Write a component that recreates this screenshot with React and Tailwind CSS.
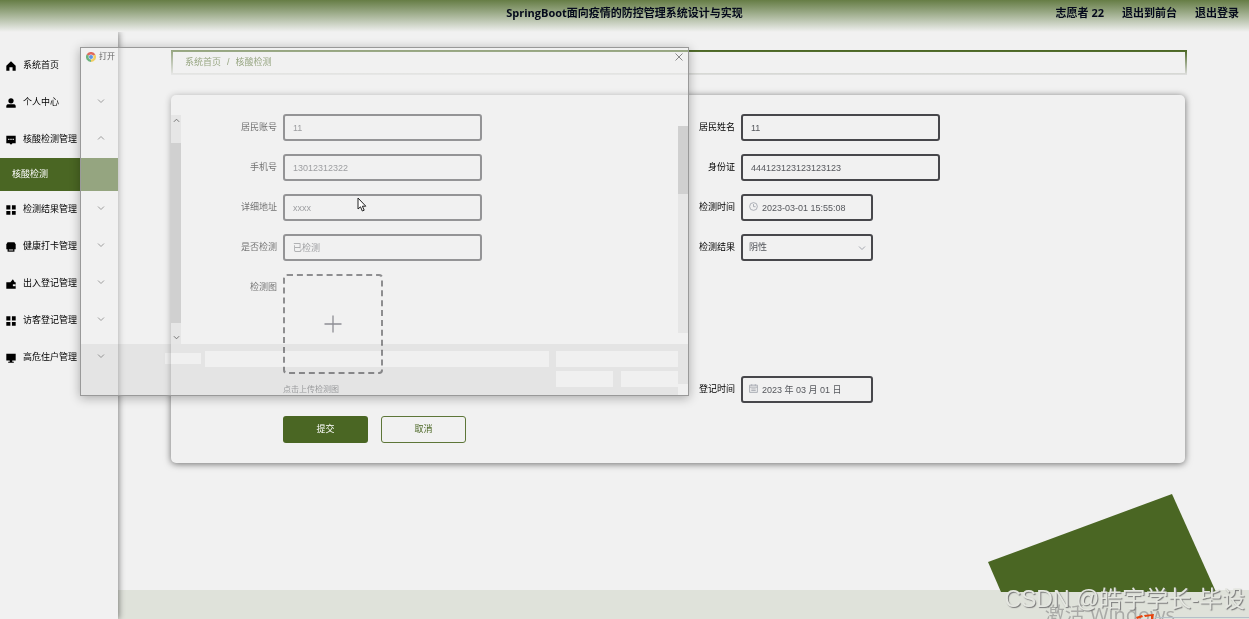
import React from 'react';

const ICONS = {
  home: <path d="M8 0.5 0.5 7.5V15.5H5.5V10H10.5V15.5H15.5V7.5Z" />,
  user: (
    <>
      <circle cx="8" cy="4.5" r="4.2" />
      <path d="M0.5 15.5V13C0.5 11 2 10 4 10H12C14 10 15.5 11 15.5 13V15.5Z" />
    </>
  ),
  chat: (
    <>
      <path d="M0.5 1H15.5V13H10.5L8 15.5 5.5 13H0.5Z" />
      <path d="M3.5 6H5.5V8H3.5ZM7 6H9V8H7ZM10.5 6H12.5V8H10.5Z" fill="#f1f1f1" />
    </>
  ),
  grid: <path d="M0.5 0.5H7V7H0.5ZM9.5 0.5H15.5V7H9.5ZM0.5 9.5H7V15.5H0.5ZM9.5 9.5H15.5V15.5H9.5Z" />,
  printer: (
    <>
      <path d="M2.5 0.5H13.5L15.5 4V11.5H0.5V4Z" />
      <path d="M2.5 10.5H13.5V15.5H2.5Z" />
      <path d="M4.5 12H11.5V13.5H4.5Z" fill="#f1f1f1" />
    </>
  ),
  wallet: (
    <>
      <path d="M0.5 5H7L11 0.5 14 5H15.5V15.5H0.5Z" />
      <path d="M11 8.5H15.5V11.5H11Z" fill="#f1f1f1" />
    </>
  ),
  monitor: <path d="M0.5 1H15.5V12H10V14H12.5V15.5H3.5V14H6V12H0.5Z" />,
};

const MENU = [
  { name: '系统首页', icon: 'home' },
  { name: '个人中心', icon: 'user', arrow: 'down' },
  { name: '核酸检测管理', icon: 'chat', arrow: 'up', child: '核酸检测' },
  { name: '检测结果管理', icon: 'grid', arrow: 'down' },
  { name: '健康打卡管理', icon: 'printer', arrow: 'down' },
  { name: '出入登记管理', icon: 'wallet', arrow: 'down' },
  { name: '访客登记管理', icon: 'grid', arrow: 'down' },
  { name: '高危住户管理', icon: 'monitor', arrow: 'down' },
];

const Chevron = ({ up, className }) => (
  <svg viewBox="0 0 8 8" className={className} fill="none" stroke="currentColor" strokeWidth="1">
    <path d={up ? 'M1 5.5 4 2.5 7 5.5' : 'M1 2.5 4 5.5 7 2.5'} />
  </svg>
);

const Header = () => (
  <header className="grid h-8 grid-cols-[1fr_auto_1fr] items-start bg-linear-to-b from-[#667d45] to-[#f1f1f1] pt-[5px] font-['Open_Sans','Noto_Sans_CJK_SC',sans-serif] text-[11px] leading-4 font-bold text-[#050a1c]">
    <span />
    <h1>SpringBoot面向疫情的防控管理系统设计与实现</h1>
    <nav className="flex justify-end gap-[18px] pr-[10px]">
      <span>志愿者 22</span>
      <a href="#front">退出到前台</a>
      <a href="#logout">退出登录</a>
    </nav>
  </header>
);

const Sidebar = () => (
  <aside className="relative w-[118px] shrink-0 bg-[#f1f1f1] pt-[15px] shadow-[1px_0_6px_rgba(0,0,0,0.45)] [clip-path:inset(0_-12px_0_0)]">
    <ul>
      {MENU.map((item) => (
        <li key={item.name}>
          <a href="#menu" className="flex h-[37px] items-center pl-[6px] pr-[13px] text-[9px] text-black">
            <svg viewBox="0 0 16 16" className="mr-[7px] size-[10px] shrink-0">
              {ICONS[item.icon]}
            </svg>
            <span className="flex-1 whitespace-nowrap">{item.name}</span>
            {item.arrow && <Chevron up={item.arrow === 'up'} className="mb-[3px] size-2 text-[#555]" />}
          </a>
          {item.child && (
            <a href="#child" className="flex h-[33px] items-center bg-[#4a6623] pl-3 text-[9px] text-white">
              {item.child}
            </a>
          )}
        </li>
      ))}
    </ul>
  </aside>
);

const Field = ({ id, label, children, className = '' }) => (
  <div className={`flex ${className}`}>
    <label htmlFor={id} className="w-[57px] shrink-0 text-right text-[9px] leading-[27px] text-black">
      {label}
    </label>
    <div className="relative ml-[6px]">{children}</div>
  </div>
);

const box =
  'block h-[27px] rounded-[3px] border-2 border-[#47474b] text-[9px] text-[#55575c] bg-transparent outline-none';

const TextField = ({ id, label, value }) => (
  <Field id={id} label={label}>
    <input id={id} defaultValue={value} className={`${box} w-[199px] px-2`} />
  </Field>
);

const ClockIcon = () => (
  <svg viewBox="0 0 10 10" className="absolute left-2 top-2 size-[9px]" fill="none" stroke="#a5a8b0" strokeWidth="1">
    <circle cx="5" cy="5" r="4.3" />
    <path d="M5 2.3V5.2H7.3" />
  </svg>
);

const CalendarIcon = () => (
  <svg viewBox="0 0 10 10" className="absolute left-2 top-2 size-[9px]" fill="none" stroke="#a5a8b0" strokeWidth="1">
    <path d="M0.7 1.3H9.3V9.3H0.7ZM0.7 3.5H9.3M2.5 5.5H7.5M2.5 7.3H7.5M3 0.3V2M7 0.3V2" />
  </svg>
);

const TestForm = () => (
  <form className="mt-5 rounded-[5px] bg-[#f1f1f1] px-[49px] pt-[19px] pb-5 shadow-[0_1px_7px_rgba(0,0,0,0.55)]">
    <div className="grid grid-cols-2 gap-y-[13px]">
      <TextField id="account" label="居民账号" value="11" />
      <TextField id="name" label="居民姓名" value="11" />
      <TextField id="phone" label="手机号" value="13012312322" />
      <TextField id="idcard" label="身份证" value="444123123123123123" />
      <TextField id="address" label="详细地址" value="xxxx" />
      <Field id="time" label="检测时间">
        <ClockIcon />
        <input id="time" defaultValue="2023-03-01 15:55:08" className={`${box} w-[132px] pl-[19px]`} />
      </Field>
      <TextField id="checked" label="是否检测" value="已检测" />
      <Field id="result" label="检测结果">
        <select id="result" className={`${box} w-[132px] appearance-none pl-[6px]`}>
          <option>阴性</option>
        </select>
        <Chevron className="absolute right-[7px] top-[10px] size-2 text-[#a5a8b0]" />
      </Field>
      <Field id="image" label="检测图">
        <button
          id="image"
          type="button"
          className="flex size-[100px] items-center justify-center rounded-[4px] border-2 border-dashed border-[#3c3c40]"
        >
          <svg viewBox="0 0 18 18" className="size-[18px]" stroke="#3c3c48" strokeWidth="1.3">
            <path d="M9 0.5V17.5M0.5 9H17.5" />
          </svg>
        </button>
        <p className="pt-[3px] text-[8px] leading-[26px] text-[#606266]">点击上传检测图</p>
      </Field>
      <Field id="date" label="登记时间" className="self-end">
        <CalendarIcon />
        <input id="date" defaultValue="2023 年 03 月 01 日" className={`${box} w-[132px] pl-[19px]`} />
      </Field>
    </div>
    <div className="mt-[13px] flex gap-[13px] pl-[63px]">
      <button type="submit" className="h-[27px] w-[85px] rounded-[3px] bg-[#4a6623] text-[9px] text-white">
        提交
      </button>
      <button type="button" className="h-[27px] w-[85px] rounded-[3px] border border-[#5d7638] text-[9px] text-[#4a6623]">
        取消
      </button>
    </div>
  </form>
);

const ChromeIcon = () => (
  <svg viewBox="0 0 20 20" className="size-[10px]">
    <path d="M10 10 1.3 5A10 10 0 0 1 18.7 5Z" fill="#e0685c" />
    <path d="M10 10 18.7 5A10 10 0 0 1 10 20Z" fill="#f2cf63" />
    <path d="M10 10V20A10 10 0 0 1 1.3 5Z" fill="#6db27c" />
    <circle cx="10" cy="10" r="5" fill="#f1f1f1" />
    <circle cx="10" cy="10" r="4" fill="#5e94e4" />
  </svg>
);

// blank controls only brighten the grey strip, whatever lies behind stays readable
const blank = 'bg-[#0d0d0d] mix-blend-color-dodge';

// half faded file picker, its own content has not been painted yet
const OpenDialog = () => (
  <div
    role="dialog"
    className="absolute left-20 top-[47px] flex h-[349px] w-[609px] flex-col border border-[#999] bg-[#f1f1f1]/45 shadow-[0_2px_10px_rgba(0,0,0,0.3)]"
  >
    <div className="flex h-[18px] shrink-0 items-center px-[5px] text-[8px] text-[#666]">
      <ChromeIcon />
      <span className="ml-[3px] flex-1">打开</span>
      <button type="button" aria-label="关闭">
        <svg viewBox="0 0 8 8" className="size-2" stroke="#888" strokeWidth="1">
          <path d="M0.5 0.5 7.5 7.5M7.5 0.5 0.5 7.5" />
        </svg>
      </button>
    </div>
    <div className="flex flex-1 justify-between pl-[90px]">
      <div className="mt-[49px] flex w-[10px] flex-col items-center bg-[#e6e6e6] text-[#666]">
        <Chevron up className="my-[2px] size-[7px]" />
        <div className="mt-[17px] w-full flex-1 bg-[#d0d0d0]" />
        <Chevron className="mt-[11px] mb-[3px] size-[7px]" />
      </div>
      <div className="mt-[60px] mb-[11px] w-[10px] bg-[#e6e6e6]">
        <div className="h-[68px] bg-[#d0d0d0]" />
      </div>
    </div>
    <div className="flex h-[51px] shrink-0 items-start bg-black/5 pl-[84px] pt-[7px]">
      <label htmlFor="file" className={`${blank} mt-[2px] h-[11px] w-9`} />
      <input id="file" className={`${blank} ml-1 h-4 min-w-0 flex-1`} />
      <div className="ml-[7px] grid w-[122px] grid-cols-2 gap-x-2 gap-y-1">
        <select aria-label="类型" className={`${blank} col-span-2 h-4 appearance-none`} />
        <button type="button" aria-label="打开" className={`${blank} h-4`} />
        <button type="button" aria-label="取消" className={`${blank} h-4`} />
      </div>
      <div className={`${blank} h-[11px] w-[10px] self-end`} />
    </div>
  </div>
);

const App = () => {
  return (
    <div className="relative flex min-h-screen flex-col overflow-hidden bg-[#f1f1f1] font-['Liberation_Sans','Noto_Sans_CJK_SC',sans-serif]">
      <Header />
      <div className="flex flex-1">
        <Sidebar />
        <main className="flex min-w-0 flex-1 flex-col">
          <div className="pl-[53px] pr-16 pt-[18px]">
            <nav className="-mr-[2px] flex h-[25px] items-center gap-[6px] border-2 pl-3 text-[9px] text-[#4a6623] [border-image:linear-gradient(to_bottom,#4a6623,#e0e0e0)_2]">
              <a href="#home">系统首页</a>
              <span>/</span>
              <span>核酸检测</span>
            </nav>
            <TestForm />
          </div>
          <div className="mt-auto h-[29px] bg-[#dfe2da]" />
        </main>
      </div>

      <svg viewBox="0 0 228 98" className="absolute bottom-[27px] right-[33px] h-[98px] w-[228px]">
        <polygon points="0,68 184,0 228,98 13,98" fill="#4a6623" />
      </svg>

      <OpenDialog />

      <svg viewBox="0 0 10 15" className="absolute left-[357px] top-[197px] h-[15px] w-[10px]">
        <path d="M1 1V12L3.5 9.8 5.3 14 7.2 13.2 5.4 9.2H8.8Z" fill="#fff" stroke="#222" strokeWidth="1" />
      </svg>

      <div className="absolute -bottom-2 right-[74px] whitespace-nowrap font-['Open_Sans','Noto_Sans_CJK_SC',sans-serif] text-[20px] leading-6 text-[#a9aaa7]">
        激活 Windows
      </div>
      <div className="absolute bottom-px right-0 h-px w-[94px] bg-[#b3c0c9]" />
      <svg viewBox="0 0 20 5" className="absolute bottom-0 right-[93px] h-[5px] w-5">
        <path d="M0 3 6 1 7 3 1 5ZM8 1 18 0 17 5 15 5 15 2 9 3Z" fill="#e8420c" />
      </svg>
      <div className="absolute bottom-1 right-1 whitespace-nowrap text-[23px] leading-8 text-[#e4e6e0] [text-shadow:1px_1px_1px_#777]">
        CSDN @皓宇学长-毕设
      </div>
    </div>
  );
};

export default App;
